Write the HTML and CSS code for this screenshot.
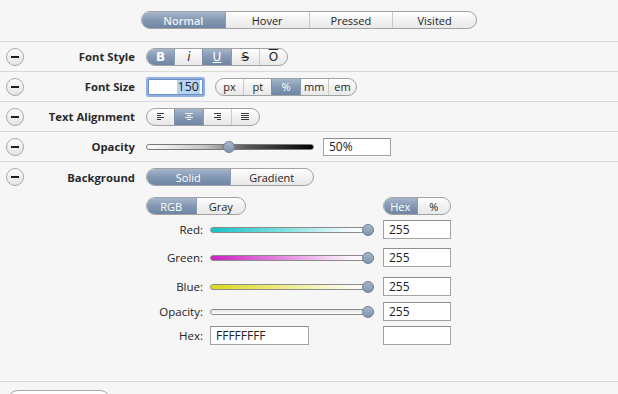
FILE: index.html
```html
<!DOCTYPE html>
<html>
<head>
<meta charset="utf-8">
<link rel="stylesheet" href="styles.css">
</head>
<body>
<div class="topbar">
  <div class="seg seg-top">
    <span class="on">Normal</span><span>Hover</span><span>Pressed</span><span>Visited</span>
  </div>
</div>

<div class="row">
  <button class="minus"></button>
  <span class="label">Font Style</span>
  <div class="seg seg-style">
    <span class="on g-b">B</span><span class="g-i">i</span><span class="on g-u">U</span><span class="g-s">S</span><span class="g-o">O</span>
  </div>
</div>

<div class="row">
  <button class="minus"></button>
  <span class="label">Font Size</span>
  <div class="size-input"><span class="sel">150</span></div>
  <div class="seg seg-units">
    <span>px</span><span>pt</span><span class="on">%</span><span>mm</span><span>em</span>
  </div>
</div>

<div class="row">
  <button class="minus"></button>
  <span class="label">Text Alignment</span>
  <div class="seg seg-align">
    <span><svg width="8" height="7" viewBox="0 0 8 7"><path d="M0 0.5h7M0 2.5h4M0 4.5h7M0 6.5h4" stroke="currentColor" stroke-width="1"/></svg></span>
    <span class="on"><svg width="8" height="7" viewBox="0 0 8 7"><path d="M0 0.5h8M2 2.5h4M0 4.5h8M2 6.5h4" stroke="currentColor" stroke-width="1"/></svg></span>
    <span><svg width="8" height="7" viewBox="0 0 8 7"><path d="M1 0.5h7M4 2.5h4M1 4.5h7M4 6.5h4" stroke="currentColor" stroke-width="1"/></svg></span>
    <span><svg width="8" height="7" viewBox="0 0 8 7"><path d="M0 0.5h8M0 2.5h8M0 4.5h8M0 6.5h8" stroke="currentColor" stroke-width="1"/></svg></span>
  </div>
</div>

<div class="row">
  <button class="minus"></button>
  <span class="label">Opacity</span>
  <div class="slider slider-opacity">
    <div class="track track-bw"></div>
    <div class="knob" style="left:83px"></div>
  </div>
  <div class="field field-pct">50%</div>
</div>

<div class="row row-bg">
  <div class="row-head">
    <button class="minus"></button>
    <span class="label">Background</span>
    <div class="seg seg-bg">
      <span class="on">Solid</span><span>Gradient</span>
    </div>
  </div>
  <div class="sub">
    <div class="sub-head">
      <div class="seg seg-mode"><span class="on">RGB</span><span>Gray</span></div>
      <div class="seg seg-fmt"><span class="on">Hex</span><span>%</span></div>
    </div>
    <div class="crow">
      <span class="clabel">Red:</span>
      <div class="slider slider-c"><div class="track track-red"></div><div class="knob" style="left:158px"></div></div>
      <div class="field field-c">255</div>
    </div>
    <div class="crow">
      <span class="clabel">Green:</span>
      <div class="slider slider-c"><div class="track track-green"></div><div class="knob" style="left:158px"></div></div>
      <div class="field field-c">255</div>
    </div>
    <div class="crow">
      <span class="clabel">Blue:</span>
      <div class="slider slider-c"><div class="track track-blue"></div><div class="knob" style="left:158px"></div></div>
      <div class="field field-c">255</div>
    </div>
    <div class="crow">
      <span class="clabel">Opacity:</span>
      <div class="slider slider-c"><div class="track track-gray"></div><div class="knob" style="left:158px"></div></div>
      <div class="field field-c">255</div>
    </div>
    <div class="crow">
      <span class="clabel">Hex:</span>
      <div class="field field-hex">FFFFFFFF</div>
      <div class="field field-c field-empty"></div>
    </div>
  </div>
</div>

<div class="footer">
  <button class="add">Add State</button>
</div>
</body>
</html>
```
FILE: styles.css
```css
* { box-sizing: border-box; }
html, body { margin: 0; padding: 0; }
body {
  width: 618px;
  height: 394px;
  overflow: hidden;
  background: #f6f6f6;
  font-family: "Open Sans", "DejaVu Sans", sans-serif;
  color: #222;
}

.topbar {
  height: 42px;
  padding-top: 11px;
  display: flex;
  justify-content: center;
  align-items: flex-start;
  border-bottom: 1px solid #d6d6d6;
}

.seg {
  display: inline-flex;
  height: 18px;
  border: 1px solid #a2a2a2;
  border-radius: 9px;
  overflow: hidden;
  background: linear-gradient(#ffffff, #f0f0f0 55%, #e9e9e9);
  flex: none;
}
.seg > span {
  flex: 1;
  display: flex;
  align-items: center;
  justify-content: center;
  border-left: 1px solid #c9c9c9;
  font-size: 11px;
  line-height: 1;
  color: #262626;
}
.seg > span:first-child { border-left: 0; }
.seg > span.on {
  background: linear-gradient(#a6b6cb, #8398b3 50%, #6e86a4);
  color: #fff;
  border-left-color: #7d91ab;
}
.seg > span.on + span { border-left-color: #8b9cb2; }

.seg-top { width: 336px; }
.seg-top > span.on { font-weight: 600; color: #eef2f7; }

.row {
  height: 30px;
  border-bottom: 1px solid #d9d9d9;
  display: flex;
  align-items: center;
}
.minus {
  width: 18px;
  height: 18px;
  margin: 0 0 0 6px;
  padding: 0;
  border: 1px solid #a9a9a9;
  border-radius: 50%;
  background: linear-gradient(#ffffff, #f1f1f1 50%, #e3e3e3);
  position: relative;
  flex: none;
}
.minus::after {
  content: "";
  position: absolute;
  left: 4px;
  top: 7px;
  width: 8px;
  height: 2px;
  background: #1e1e1e;
}
.label {
  width: 111px;
  margin-right: 11px;
  text-align: right;
  font-weight: 700;
  font-size: 11.3px;
  color: #2a2a2a;
  flex: none;
}

.seg-style { width: 142px; }
.seg-style > span { font-size: 12px; font-family: "DejaVu Sans", sans-serif; }
.g-b { font-weight: 700; }
.g-i { font-style: italic; }
.g-u { text-decoration: underline; }
.g-s { text-decoration: line-through; }
.g-o { text-decoration: overline; }

.size-input {
  width: 55px;
  height: 16px;
  margin: 0 0 0 2px;
  background: #fff;
  border: 1px solid #6f8fba;
  box-shadow: 0 0 0 2px #8db1e4;
  border-radius: 1px;
  display: flex;
  align-items: center;
  justify-content: flex-end;
  padding-right: 2px;
  font-size: 12.5px;
  flex: none;
}
.size-input .sel { background: #b6d3f6; padding: 0 1px; line-height: 14px; }
.seg-units { width: 142px; margin-left: 12px; }

.seg-align { width: 114px; }
.seg-align > span { color: #3a3a3a; }
.seg-align > span.on { color: #eef2f7; }

.slider {
  position: relative;
  height: 12px;
  display: flex;
  align-items: center;
  flex: none;
}
.track {
  flex: 1;
  height: 6px;
  border: 1px solid #8d8d8d;
  border-radius: 3px;
}
.knob {
  position: absolute;
  top: 0;
  width: 12px;
  height: 12px;
  margin-left: -6px;
  border-radius: 50%;
  border: 1px solid #6e7f96;
  background: linear-gradient(#a9b7ca, #8093ad);
}
.slider-opacity { width: 168px; }
.track-bw { background: linear-gradient(to right, #ffffff, #c4c4c4 35%, #5a5a5a 60%, #000 100%); border-color: #777; }
.field {
  height: 18px;
  background: #fff;
  border: 1px solid #a3a3a3;
  border-top-color: #8f8f8f;
  font-size: 12px;
  padding-left: 5px;
  display: flex;
  align-items: center;
  flex: none;
}
.field-pct { width: 68px; margin-left: 9px; }

.row-bg {
  height: 220px;
  display: block;
}
.row-head {
  height: 30px;
  display: flex;
  align-items: center;
}
.seg-bg { width: 168px; }
.sub {
  margin-left: 146px;
  width: 305px;
}
.sub-head {
  display: flex;
  justify-content: space-between;
  margin-top: 5px;
}
.seg-mode { width: 100px; }
.seg-fmt { width: 68px; }
.crow {
  display: flex;
  align-items: center;
  height: 19px;
  margin-top: 9px;
}
.crow:nth-child(2) { margin-top: 5px; }
.crow:nth-child(4) { margin-top: 10px; }
.crow:nth-child(5) { margin-top: 6px; }
.crow:nth-child(6) { margin-top: 5px; }
.clabel {
  width: 57px;
  margin-right: 7px;
  text-align: right;
  font-size: 11.5px;
  color: #222;
  flex: none;
}
.slider-c { width: 164px; }
.track-red { background: linear-gradient(to right, #19c1c4, #7fdfe0 45%, #f4fbfb 85%, #fff); }
.track-green { background: linear-gradient(to right, #cc22c4, #e48ce0 45%, #fbf2fb 85%, #fff); }
.track-blue { background: linear-gradient(to right, #d9d91a, #ecec88 45%, #fbfbf0 85%, #fff); }
.track-gray { background: linear-gradient(#e4e4e4, #fff); }
.field-c { width: 68px; margin-left: 9px; height: 19px; }
.field-hex { width: 99px; height: 19px; }
.field-empty { margin-left: auto; }

.footer { padding: 6px 0 0 7px; }
.add {
  width: 104px;
  height: 22px;
  border: 1px solid #a8a8a8;
  border-radius: 11px;
  background: linear-gradient(#fff, #eeeeee);
  font-family: "Open Sans", "DejaVu Sans", sans-serif;
  font-size: 11px;
  color: #222;
  padding: 0;
}
```
